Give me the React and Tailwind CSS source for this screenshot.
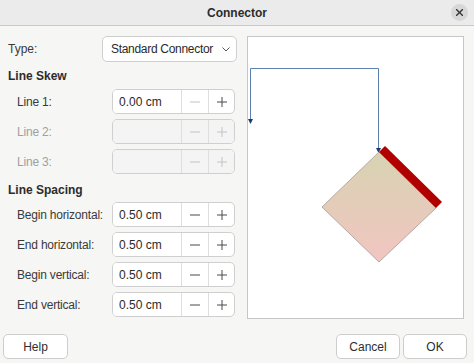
import React from "react";

const font = { fontFamily: '"Liberation Sans", Arial, sans-serif' };

const Minus = ({ dim }) => (
  <svg width="10" height="10" viewBox="0 0 10 10">
    <line x1="0" y1="5" x2="10" y2="5" stroke={dim ? "#c4c4c4" : "#4a4a4a"} strokeWidth="1" />
  </svg>
);

const Plus = ({ dim }) => (
  <svg width="10" height="10" viewBox="0 0 10 10">
    <line x1="0" y1="5" x2="10" y2="5" stroke={dim ? "#c4c4c4" : "#4a4a4a"} strokeWidth="1" />
    <line x1="5" y1="0" x2="5" y2="10" stroke={dim ? "#c4c4c4" : "#4a4a4a"} strokeWidth="1" />
  </svg>
);

const SpinRow = ({ label, value, disabled, minDim }) => (
  <div className="flex items-center h-[25px]">
    <div className={`w-[112px] shrink-0 whitespace-nowrap pl-[17px] text-[12px] tracking-[-0.2px] ${disabled ? "text-[#a0a0a0]" : "text-[#3a3a3a]"}`}>
      {label}
    </div>
    <div className="flex w-[123px] h-[25px] border border-[#cfcfcf] rounded-[5px] bg-white overflow-hidden">
      <div className={`w-[68px] flex items-center pl-[6px] text-[12px] ${disabled ? "bg-[#f4f4f4]" : "bg-white"} text-[#2a2a2a]`}>
        {value}
      </div>
      <div className={`w-[27px] flex items-center justify-center border-l border-[#dedede] ${disabled ? "bg-[#f4f4f4]" : ""}`}>
        <Minus dim={disabled || minDim} />
      </div>
      <div className={`flex-1 flex items-center justify-center border-l border-[#dedede] ${disabled ? "bg-[#f4f4f4]" : ""}`}>
        <Plus dim={disabled} />
      </div>
    </div>
  </div>
);

const Preview = () => (
  <div className="w-[217px] h-[283px] border border-[#c6c6c6] bg-white">
    <svg width="215" height="281" viewBox="248 37 215 281">
      <defs>
        <linearGradient id="g" x1="0" y1="0" x2="0" y2="1">
          <stop offset="0" stopColor="#d7d3b2" />
          <stop offset="1" stopColor="#f2c5c1" />
        </linearGradient>
      </defs>
      <polyline points="250.5,122 250.5,68.5 378.5,68.5 378.5,150" fill="none" stroke="#5e7fb2" strokeWidth="1" />
      <polygon points="248,119 253,119 250.5,124" fill="#1f3a70" />
      <polygon points="376,148 381,148 378.5,153" fill="#1f3a70" />
      <polygon points="379,152 436,208 379,262 322,207" fill="url(#g)" stroke="#b5aaa2" strokeWidth="1" />
      <polygon points="379,152 385,146 442,202 436,208" fill="#b00000" />
    </svg>
  </div>
);

const Btn = ({ children, w }) => (
  <button className={`${w} h-[25px] border border-[#cdcdcd] rounded-[5px] bg-white text-[12px] text-[#2e2e2e]`}>
    {children}
  </button>
);

export default function App() {
  return (
    <div className="w-[474px] h-[363px] bg-[#f6f6f5] flex flex-col overflow-hidden" style={font}>
      <div className="h-[26px] bg-[#ebebeb] border-b border-[#c9c9c9] flex items-center justify-center relative">
        <span className="text-[12px] font-bold text-[#2c2c2c]">Connector</span>
        <div className="absolute right-[6px] top-[4px] w-[17px] h-[17px] rounded-full bg-[#d7d7d7] flex items-center justify-center">
          <svg width="7" height="7" viewBox="0 0 7 7">
            <line x1="0" y1="0" x2="7" y2="7" stroke="#333" strokeWidth="1.3" />
            <line x1="7" y1="0" x2="0" y2="7" stroke="#333" strokeWidth="1.3" />
          </svg>
        </div>
      </div>

      <div className="flex pt-[10px]">
        <div className="w-[247px] shrink-0 flex flex-col">
          <div className="flex items-center h-[26px]">
            <div className="w-[102px] shrink-0 pl-[8px] text-[12px] text-[#3a3a3a]">Type:</div>
            <div className="w-[135px] h-[26px] border border-[#cfcfcf] rounded-[5px] bg-white flex items-center justify-between pl-[8px] pr-[6px] text-[12px] tracking-[-0.3px] text-[#2a2a2a] whitespace-nowrap">
              <span>Standard Connector</span>
              <svg width="8" height="5" viewBox="0 0 8 5">
                <polyline points="0.5,0.5 4,4 7.5,0.5" fill="none" stroke="#555" strokeWidth="1" />
              </svg>
            </div>
          </div>

          <div className="mt-[5px] h-[18px] flex items-center pl-[8px] text-[12px] font-bold text-[#2c2c2c]">Line Skew</div>
          <div className="mt-[4px] flex flex-col gap-[5px]">
            <SpinRow label="Line 1:" value="0.00 cm" minDim />
            <SpinRow label="Line 2:" value="" disabled />
            <SpinRow label="Line 3:" value="" disabled />
          </div>

          <div className="mt-[7px] h-[18px] flex items-center pl-[8px] text-[12px] font-bold text-[#2c2c2c]">Line Spacing</div>
          <div className="mt-[3px] flex flex-col gap-[5px]">
            <SpinRow label="Begin horizontal:" value="0.50 cm" />
            <SpinRow label="End horizontal:" value="0.50 cm" />
            <SpinRow label="Begin vertical:" value="0.50 cm" />
            <SpinRow label="End vertical:" value="0.50 cm" />
          </div>
        </div>
        <Preview />
      </div>

      <div className="flex mt-[15px] px-[3px]">
        <Btn w="w-[65px]">Help</Btn>
        <div className="flex-1" />
        <div className="flex gap-[3px] pr-[4px]">
          <Btn w="w-[64px]">Cancel</Btn>
          <Btn w="w-[64px]">OK</Btn>
        </div>
      </div>
    </div>
  );
}
